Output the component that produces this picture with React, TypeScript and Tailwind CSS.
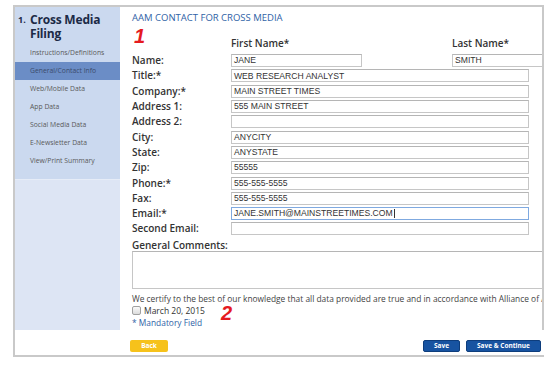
const menu = [
  "Instructions/Definitions",
  "General/Contact Info",
  "Web/Mobile Data",
  "App Data",
  "Social Media Data",
  "E-Newsletter Data",
  "View/Print Summary",
];

const rows = [
  { label: "Title:*", value: "WEB RESEARCH ANALYST" },
  { label: "Company:*", value: "MAIN STREET TIMES" },
  { label: "Address 1:", value: "555 MAIN STREET" },
  { label: "Address 2:", value: "" },
  { label: "City:", value: "ANYCITY" },
  { label: "State:", value: "ANYSTATE" },
  { label: "Zip:", value: "55555" },
  { label: "Phone:*", value: "555-555-5555" },
  { label: "Fax:", value: "555-555-5555" },
  { label: "Email:*", value: "JANE.SMITH@MAINSTREETIMES.COM", focus: true },
  { label: "Second Email:", value: "" },
];

function Field({ value, width, focus }: { value: string; width: string; focus?: boolean }) {
  return (
    <div
      className={`${width} h-[13px] shrink-0 border flex items-center pl-[2px] text-[8.6px] text-[#333] font-['Liberation_Sans',Arial,sans-serif] leading-none ${
        focus ? "border-[#7fa9e0]" : "border-[#c6c6c6] border-t-[#b5b5b5]"
      }`}
    >
      {value}
      {focus && <span className="w-px h-[9px] bg-[#333] ml-px" />}
    </div>
  );
}

export default function App() {
  return (
    <div className="w-[557px] h-[374px] bg-white overflow-hidden relative font-['Open_Sans',sans-serif]">
      <div className="ml-[13px] mt-[5px] w-[531px] border-2 border-r-0 border-[#c9c9c9]">

        {/* Top: sidebar + form */}
        <div className="flex h-[323px] border-r-2 border-[#c9c9c9]">

          {/* Sidebar */}
          <aside className="w-[105px] shrink-0 bg-[#dde5f4] flex flex-col">
            <div className="bg-[#cbd9ef] h-[173px] border-b border-[#e6ecf7]">
              <div className="flex pt-[6px] pl-[3px] text-[#1c2a46]">
                <span className="w-[12px] text-[9px] font-bold leading-[14px]">1.</span>
                <h1 className="text-[12px] font-bold leading-[14px] tracking-[-0.2px]">
                  Cross Media
                  <br />
                  Filing
                </h1>
              </div>
              <ul className="mt-[3px]">
                {menu.map((m) => (
                  <li
                    key={m}
                    className={`h-[18px] flex items-center pl-[15px] text-[6.8px] ${
                      m === "General/Contact Info" ? "bg-[#6b8dc6] text-[#3b4c6c]" : "text-[#5a5a5a]"
                    }`}
                  >
                    {m}
                  </li>
                ))}
              </ul>
            </div>
          </aside>

          {/* Form */}
          <main className="flex-1 overflow-hidden pl-[12px] pt-[5px] relative">
            <h2 className="text-[9.5px] leading-[12px] text-[#2f62a6]">
              AAM CONTACT FOR CROSS MEDIA
            </h2>

            <span className="absolute left-[14px] top-[19px] text-[20px] leading-[20px] font-bold italic text-[#e51a1f] font-['Liberation_Sans',Arial,sans-serif]">
              1
            </span>

            <div className="flex mt-[13px] h-[12px] items-center text-[10px] font-semibold text-[#333]">
              <span className="w-[99px]" />
              <span className="w-[221px]">First Name*</span>
              <span>Last Name*</span>
            </div>

            <div className="mt-[4px]">
              <div className="flex items-center h-[15.3px]">
                <span className="w-[99px] shrink-0 text-[10px] font-semibold text-[#333]">Name:</span>
                <Field value="JANE" width="w-[131px]" />
                <span className="w-[90px] shrink-0" />
                <Field value="SMITH" width="w-[131px]" />
              </div>
              {rows.map((r) => (
                <div key={r.label} className="flex items-center h-[15.3px]">
                  <span className="w-[99px] shrink-0 text-[10px] font-semibold text-[#333]">{r.label}</span>
                  <Field value={r.value} width="w-[298px]" focus={r.focus} />
                </div>
              ))}
            </div>

            <div className="mt-[3.4px] h-[11px] leading-[11px] text-[10px] font-semibold text-[#333]">
              General Comments:
            </div>
            <div className="w-[440px] h-[38px] border border-[#c6c6c6] border-t-[#b5b5b5]" />

            <p className="mt-[4px] h-[12px] leading-[12px] text-[8.4px] text-[#444] whitespace-nowrap">
              We certify to the best of our knowledge that all data provided are true and in accordance with Alliance of Audited Media
            </p>
            <div className="flex items-center h-[12px] gap-[3px]">
              <span className="w-[9px] h-[9px] rounded-[2px] border border-[#a0a0a0] bg-gradient-to-b from-[#fafafa] to-[#dcdcdc]" />
              <span className="text-[8.5px] text-[#333]">March 20, 2015</span>
            </div>
            <p className="h-[12px] leading-[12px] text-[8.4px] text-[#2f62a6]">* Mandatory Field</p>

            <span className="absolute left-[101px] top-[296px] text-[20px] leading-[20px] font-bold italic text-[#e51a1f] font-['Liberation_Sans',Arial,sans-serif]">
              2
            </span>
          </main>
        </div>

        {/* Buttons */}
        <div className="h-[25px] flex items-start pt-[10px] pl-[115px] pr-[3px]">
          <button className="w-[38px] h-[12px] rounded-[2px] bg-[#f6c21b] text-white text-[6.5px] font-bold leading-none">
            Back
          </button>
          <div className="flex-1" />
          <button className="w-[37px] h-[12px] rounded-[2px] bg-[#1753a1] border border-[#0e3d7c] text-white text-[6.5px] font-bold leading-none">
            Save
          </button>
          <button className="ml-[6px] w-[75px] h-[12px] rounded-[2px] bg-[#1753a1] border border-[#0e3d7c] text-white text-[6.5px] font-bold leading-none">
            Save &amp; Continue
          </button>
        </div>
      </div>
    </div>
  );
}
